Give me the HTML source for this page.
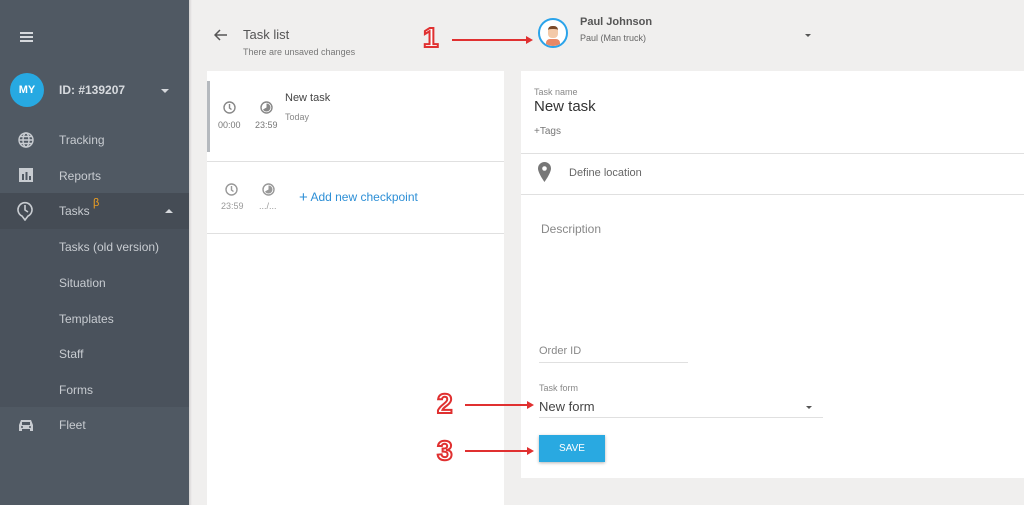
<!DOCTYPE html>
<html><head><meta charset="utf-8"><style>
*{margin:0;padding:0;box-sizing:border-box}
body{width:1024px;height:505px;overflow:hidden;background:#f0efee;font-family:"Liberation Sans",sans-serif;position:relative}
.a{position:absolute}
#sb{left:0;top:0;width:189px;height:505px;background:#505963;color:#d5d8dc}
.it{position:absolute;left:59px;font-size:12px;color:#c8ccd1}
.num{font-size:28px;font-weight:bold;color:#fff;-webkit-text-stroke:2px #e03030;line-height:30px}
</style></head><body>
<div id="sb" class="a">
  <div class="a" style="left:20px;top:32px;width:13px;height:1.5px;background:#d5d8dc;box-shadow:0 4px 0 #d5d8dc,0 8px 0 #d5d8dc"></div>
  <div class="a" style="left:10px;top:73px;width:34px;height:34px;border-radius:50%;background:#27a9e2;color:#fff;font-size:11px;font-weight:bold;text-align:center;line-height:34px">MY</div>
  <div class="it" style="top:83px;font-weight:bold;color:#d8dbdf">ID: #139207</div>
  <div class="a" style="left:161px;top:89px;border:4px solid transparent;border-top-color:#d5d8dc;border-bottom:0"></div>
  <svg class="a" style="left:18px;top:132px" width="16" height="16" viewBox="0 0 16 16" fill="none" stroke="#c8ccd1" stroke-width="1.4"><circle cx="8" cy="8" r="7"/><ellipse cx="8" cy="8" rx="3" ry="7"/><path d="M1 8h14M2 4.5h12M2 11.5h12"/></svg>
  <div class="it" style="top:133px">Tracking</div>
  <svg class="a" style="left:19px;top:168px" width="14" height="14"><rect width="14" height="14" fill="#c8ccd1"/><rect x="3" y="6" width="2" height="6" fill="#505963"/><rect x="6.5" y="4" width="2" height="8" fill="#505963"/><rect x="10" y="8" width="2" height="4" fill="#505963"/></svg>
  <div class="it" style="top:169px">Reports</div>
  <div class="a" style="left:0;top:193px;width:189px;height:214px;background:#4a525c"></div>
  <div class="a" style="left:0;top:193px;width:189px;height:36px;background:#454c55"></div>
  <svg class="a" style="left:17px;top:201px" width="16" height="20" viewBox="0 0 16 20" fill="none" stroke="#c8ccd1" stroke-width="1.6"><path d="M8 19l-3-4A7 7 0 1 1 11 15z"/><path d="M8 4v5l3 2"/></svg>
  <div class="it" style="top:204px">Tasks</div>
  <div class="a" style="left:93px;top:197px;color:#f0a020;font-size:11px">β</div>
  <div class="a" style="left:165px;top:209px;border:4px solid transparent;border-bottom-color:#d5d8dc;border-top:0"></div>
  <div class="it" style="top:240px">Tasks (old version)</div>
  <div class="it" style="top:276px">Situation</div>
  <div class="it" style="top:312px">Templates</div>
  <div class="it" style="top:347px">Staff</div>
  <div class="it" style="top:383px">Forms</div>
  <svg class="a" style="left:18px;top:419px" width="16" height="12" viewBox="0 0 16 12"><path d="M3 1h10l2 5v6h-3v-2H4v2H1V6z" fill="#c8ccd1"/><rect x="4" y="3" width="8" height="3" fill="#505963"/><circle cx="4" cy="8" r="1" fill="#505963"/><circle cx="12" cy="8" r="1" fill="#505963"/></svg>
  <div class="it" style="top:418px">Fleet</div>
</div>
<div class="a" style="left:189px;top:0;width:3px;height:505px;background:linear-gradient(90deg,rgba(0,0,0,.12),rgba(0,0,0,0))"></div>

<svg class="a" style="left:214px;top:29px" width="14" height="12" viewBox="0 0 14 12" fill="none" stroke="#555" stroke-width="1.5"><path d="M13 6H2M6 1L1 6l5 5"/></svg>
<div class="a" style="left:243px;top:27px;font-size:13px;color:#555">Task list</div>
<div class="a" style="left:243px;top:47px;font-size:9px;color:#777">There are unsaved changes</div>
<div class="a num" style="left:423px;top:23px">1</div>
<div class="a" style="left:452px;top:39px;width:74px;height:1.5px;background:#e03030"></div>
<div class="a" style="left:526px;top:36px;border:4px solid transparent;border-left:7px solid #e03030;border-right:0"></div>
<div class="a" style="left:538px;top:18px;width:30px;height:30px;border-radius:50%;border:2px solid #2aa3ea;background:#fff;overflow:hidden">
 <div class="a" style="left:8px;top:6px;width:10px;height:12px;border-radius:4px;background:#f3c9a8;border-top:3px solid #7a4a2a"></div>
 <div class="a" style="left:6px;top:19px;width:14px;height:8px;border-radius:4px 4px 0 0;background:#e88866"></div>
</div>
<div class="a" style="left:580px;top:16px;font-size:11px;font-weight:bold;color:#555">Paul Johnson</div>
<div class="a" style="left:580px;top:33px;font-size:9px;color:#666">Paul (Man truck)</div>
<div class="a" style="left:805px;top:34px;border:3.5px solid transparent;border-top-color:#555;border-bottom:0"></div>

<div class="a" style="left:207px;top:71px;width:297px;height:434px;background:#fff"></div>
<div class="a" style="left:207px;top:81px;width:3px;height:71px;background:#b5b9be"></div>
<div class="a" style="left:207px;top:161px;width:297px;height:1px;background:#e0e0e0"></div>
<div class="a" style="left:207px;top:233px;width:297px;height:1px;background:#e0e0e0"></div>
<svg class="a" style="left:223px;top:101px" width="13" height="13" fill="none" stroke="#888" stroke-width="1.4"><circle cx="6.5" cy="6.5" r="5.5"/><path d="M6.5 3v4l2 1.5"/></svg>
<svg class="a" style="left:260px;top:101px" width="13" height="13"><circle cx="6.5" cy="6.5" r="5.5" fill="none" stroke="#888" stroke-width="1.4"/><path d="M6.5 6.5V2.5A4 4 0 1 1 3 8.5z" fill="#888"/></svg>
<div class="a" style="left:218px;top:120px;font-size:9px;color:#777">00:00</div>
<div class="a" style="left:255px;top:120px;font-size:9px;color:#777">23:59</div>
<div class="a" style="left:285px;top:92px;font-size:11px;color:#444">New task</div>
<div class="a" style="left:285px;top:112px;font-size:9px;color:#888">Today</div>
<svg class="a" style="left:225px;top:183px" width="13" height="13" fill="none" stroke="#999" stroke-width="1.4"><circle cx="6.5" cy="6.5" r="5.5"/><path d="M6.5 3v4l2 1.5"/></svg>
<svg class="a" style="left:262px;top:183px" width="13" height="13"><circle cx="6.5" cy="6.5" r="5.5" fill="none" stroke="#999" stroke-width="1.4"/><path d="M6.5 6.5V2.5A4 4 0 1 1 3 8.5z" fill="#999"/></svg>
<div class="a" style="left:221px;top:201px;font-size:9px;color:#999">23:59</div>
<div class="a" style="left:259px;top:201px;font-size:9px;color:#999">.../...</div>
<div class="a" style="left:299px;top:188px;font-size:12px;color:#2d8fd6"><span style="font-size:15px;position:relative;top:1px">+</span> Add new checkpoint</div>

<div class="a" style="left:521px;top:71px;width:503px;height:407px;background:#fff"></div>
<div class="a" style="left:534px;top:87px;font-size:9px;color:#888">Task name</div>
<div class="a" style="left:534px;top:98px;font-size:15px;color:#333">New task</div>
<div class="a" style="left:534px;top:126px;font-size:10px;color:#777">+Tags</div>
<div class="a" style="left:521px;top:153px;width:503px;height:1px;background:#e0e0e0"></div>
<svg class="a" style="left:538px;top:162px" width="13" height="20" viewBox="0 0 13 20"><path d="M6.5 0A6.5 6.5 0 0 0 0 6.5C0 11 6.5 20 6.5 20S13 11 13 6.5A6.5 6.5 0 0 0 6.5 0z" fill="#777"/><circle cx="6.5" cy="6.5" r="2.3" fill="#fff"/></svg>
<div class="a" style="left:569px;top:167px;font-size:11px;color:#666">Define location</div>
<div class="a" style="left:521px;top:194px;width:503px;height:1px;background:#e0e0e0"></div>
<div class="a" style="left:541px;top:222px;font-size:12px;color:#888">Description</div>
<div class="a" style="left:539px;top:345px;font-size:11px;color:#888">Order ID</div>
<div class="a" style="left:539px;top:362px;width:149px;height:1px;background:#e0e0e0"></div>
<div class="a" style="left:539px;top:383px;font-size:9px;color:#888">Task form</div>
<div class="a" style="left:539px;top:399px;font-size:13px;color:#444">New form</div>
<div class="a" style="left:806px;top:406px;border:3.5px solid transparent;border-top-color:#555;border-bottom:0"></div>
<div class="a" style="left:539px;top:417px;width:284px;height:1px;background:#e0e0e0"></div>
<div class="a" style="left:539px;top:435px;width:66px;height:27px;background:#29a9e1;box-shadow:0 1px 3px rgba(0,0,0,.3);color:#fff;font-size:10px;text-align:center;line-height:27px">SAVE</div>

<div class="a num" style="left:437px;top:389px">2</div>
<div class="a" style="left:465px;top:404px;width:63px;height:1.5px;background:#e03030"></div>
<div class="a" style="left:527px;top:401px;border:4px solid transparent;border-left:7px solid #e03030;border-right:0"></div>
<div class="a num" style="left:437px;top:436px">3</div>
<div class="a" style="left:465px;top:450px;width:63px;height:1.5px;background:#e03030"></div>
<div class="a" style="left:527px;top:447px;border:4px solid transparent;border-left:7px solid #e03030;border-right:0"></div>
</body></html>
